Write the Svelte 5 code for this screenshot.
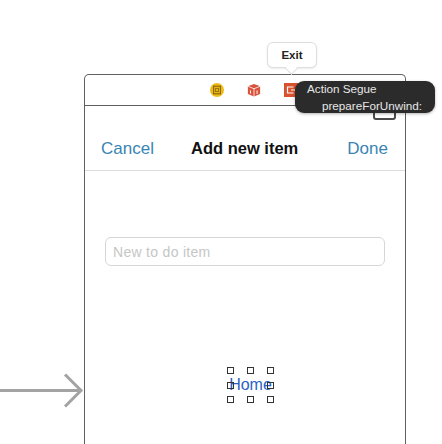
<script lang="ts">
  const handles = [
    { x: 0, y: 0 }, { x: 20, y: 0 }, { x: 40, y: 0 },
    { x: 0, y: 15 }, { x: 40, y: 15 },
    { x: 0, y: 29 }, { x: 20, y: 29 }, { x: 40, y: 29 },
  ];
</script>

<div class="canvas">
  <div class="exit-bubble">Exit</div>
  <div class="exit-tail"></div>

  <div class="scene">
    <div class="dock">
      <svg class="dock-icon" width="14" height="14" viewBox="0 0 14 14">
        <circle cx="7" cy="7" r="7" fill="#eebc14" />
        <rect x="3.6" y="3.2" width="6.8" height="7.6" fill="none" stroke="#8a6a10" stroke-width="1.2" />
        <rect x="5.6" y="5.4" width="2.8" height="3.2" fill="none" stroke="#8a6a10" stroke-width="0.9" />
      </svg>
      <svg class="dock-icon" width="14" height="14" viewBox="0 0 16 16">
        <path d="M8 1 15 3.800v8.700L8 15.500 1 12.500V3.800z" fill="#d9533c" />
        <path d="M1 3.800 8 6.500 15 3.800M8 6.500V15.500" fill="none" stroke="#fff" stroke-width="0.9" />
        <path d="M4 8.500v3.500M11.500 8.500v4" stroke="#fff" stroke-width="1.100" />
      </svg>
      <svg class="dock-icon" width="14" height="14" viewBox="0 0 14 14">
        <rect width="14" height="14" fill="#d9512f" />
        <path d="M9.500 4H3.500v6h6M7 7h5" fill="none" stroke="#fff" stroke-width="1.200" />
      </svg>
    </div>

    <nav class="navbar">
      <span class="nav-action">Cancel</span>
      <span class="nav-title">Add new item</span>
      <span class="nav-action">Done</span>
    </nav>

    <div class="content">
      <div class="field">New to do item</div>
      <div class="selected">
        <span class="home">Home</span>
        {#each handles as h}
          <i class="handle" style="left: {h.x}px; top: {h.y}px"></i>
        {/each}
      </div>
    </div>
  </div>

  <svg class="entry-arrow" width="84" height="36" viewBox="0 0 84 36">
    <path d="M0 18.500H80M65 2.500 81 18.500 65 34.500" fill="none" stroke="#a3a3a3" stroke-width="3" />
  </svg>

  <div class="peek"></div>
  <div class="tooltip">
    <div>Action Segue</div>
    <div class="tooltip-sub">prepareForUnwind:</div>
  </div>
</div>

<style>
  :global(body) {
    background: #fff;
    font-family: "Liberation Sans", Arial, sans-serif;
  }

  .canvas {
    position: relative;
    width: 442px;
    height: 444px;
    padding: 74px 0 0 84px;
    box-sizing: border-box;
    overflow: hidden;
  }

  .scene {
    width: 322px;
    height: 370px;
    box-sizing: border-box;
    border: 1px solid #606060;
    border-bottom: none;
    border-radius: 5px 5px 0 0;
    display: flex;
    flex-direction: column;
  }

  .dock {
    height: 31px;
    flex: none;
    box-sizing: border-box;
    border-bottom: 1px solid #606060;
    display: flex;
    align-items: center;
    gap: 23px;
    padding: 0 0 1px 125px;
  }

  .navbar {
    height: 65px;
    flex: none;
    box-sizing: border-box;
    border-bottom: 1px solid #dcdcdc;
    display: flex;
    align-items: center;
    justify-content: space-between;
    padding: 21px 17px 0 16px;
    font-size: 17px;
  }

  .nav-action {
    color: #3a84b4;
  }

  .nav-title {
    color: #111;
    font-weight: 700;
    font-size: 16.5px;
    margin-left: -12px;
  }

  .content {
    flex: 1;
    display: flex;
    flex-direction: column;
    padding: 66px 20px 0;
  }

  .field {
    height: 29px;
    box-sizing: border-box;
    border: 1px solid #d6d6d6;
    border-radius: 6px;
    padding-left: 7px;
    display: flex;
    align-items: center;
    color: #c6c6c6;
    font-size: 14px;
    letter-spacing: 0.3px;
  }

  .selected {
    position: relative;
    width: 47px;
    height: 36px;
    margin: 101px 0 0 122px;
  }

  .home {
    position: absolute;
    left: 0;
    right: 0;
    top: 9px;
    text-align: center;
    color: #2a62c4;
    font-size: 16px;
    line-height: 18px;
  }

  .handle {
    position: absolute;
    width: 5px;
    height: 5px;
    border: 1px solid #333;
    box-sizing: content-box;
    background: transparent;
  }

  .exit-bubble {
    position: absolute;
    left: 267px;
    top: 42px;
    width: 50px;
    height: 26px;
    box-sizing: border-box;
    background: #fff;
    border: 1px solid #dedede;
    border-radius: 6px;
    box-shadow: 0 1px 2px rgba(0, 0, 0, 0.08);
    display: flex;
    align-items: center;
    justify-content: center;
    color: #222;
    font-size: 11.5px;
    font-weight: 700;
  }

  .exit-tail {
    position: absolute;
    left: 287px;
    top: 64px;
    width: 8px;
    height: 8px;
    background: #fff;
    border-right: 1px solid #dedede;
    border-bottom: 1px solid #dedede;
    transform: rotate(45deg);
  }

  .entry-arrow {
    position: absolute;
    left: 0;
    top: 372px;
  }

  .peek {
    position: absolute;
    left: 373px;
    top: 108px;
    width: 23px;
    height: 12px;
    box-sizing: border-box;
    border: 2px solid #4a4a4a;
    border-radius: 0 0 3px 3px;
    background: #fff;
  }

  .tooltip {
    position: absolute;
    left: 295px;
    top: 81px;
    width: 140px;
    height: 32px;
    box-sizing: border-box;
    padding: 0 13px 0 12px;
    background: #2b2b2b;
    border-radius: 9px;
    box-shadow: 0 1px 3px rgba(0, 0, 0, 0.3);
    color: #e6e6e6;
    font-size: 11.7px;
    line-height: 16.5px;
  }

  .tooltip-sub {
    text-align: right;
  }
</style>
